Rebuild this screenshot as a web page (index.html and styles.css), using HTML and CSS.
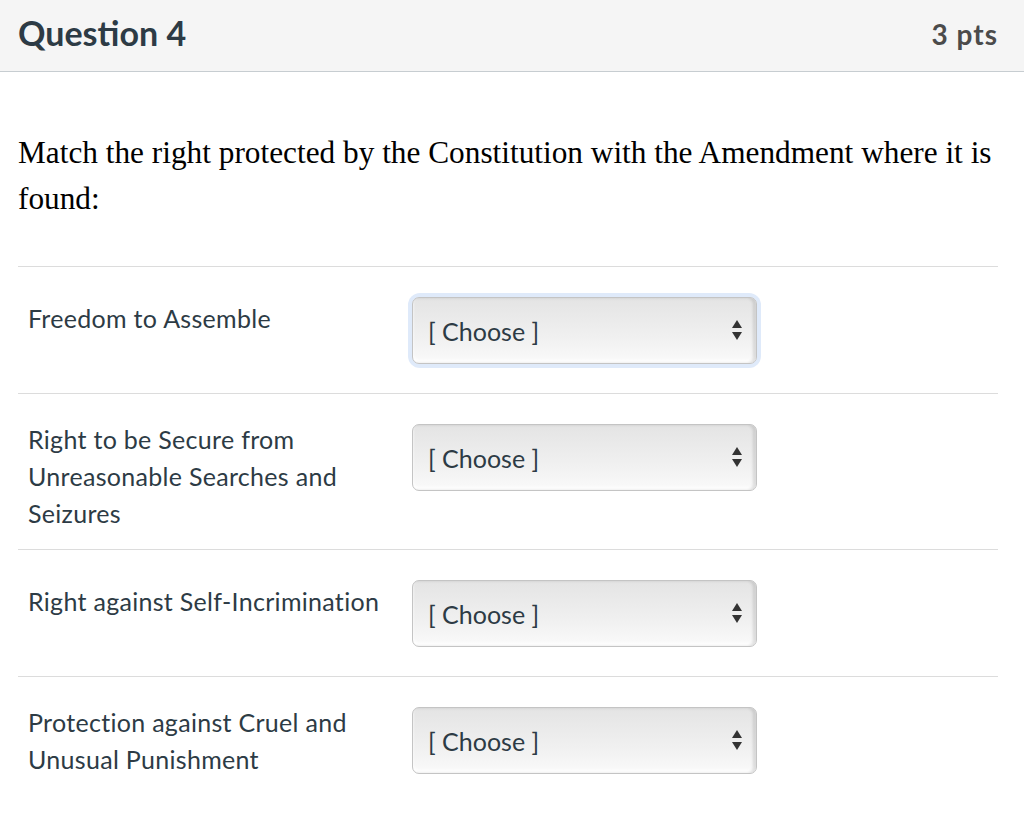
FILE: index.html
```html
<!DOCTYPE html>
<html lang="en">
<head>
<meta charset="utf-8">
<title>Question 4</title>
<link rel="stylesheet" href="styles.css">
</head>
<body>
<div class="question">
  <div class="q-header">
    <h2 class="q-title">Question 4</h2>
    <span class="q-points">3 pts</span>
  </div>
  <div class="q-body">
    <p class="q-text">Match the right protected by the Constitution with the Amendment where it is found:</p>
    <div class="answers">
      <div class="answer-row">
        <div class="answer-label single">Freedom to Assemble</div>
        <div class="select-wrap focused">
          <select class="choose"><option>[ Choose ]</option></select>
          <svg class="arrows" width="10" height="20" viewBox="0 0 10 20"><path d="M5 0 L10 8 L0 8 Z M0 12 L10 12 L5 20 Z" fill="#333"/></svg>
        </div>
      </div>
      <div class="answer-row">
        <div class="answer-label">Right to be Secure from Unreasonable Searches and Seizures</div>
        <div class="select-wrap">
          <select class="choose"><option>[ Choose ]</option></select>
          <svg class="arrows" width="10" height="20" viewBox="0 0 10 20"><path d="M5 0 L10 8 L0 8 Z M0 12 L10 12 L5 20 Z" fill="#333"/></svg>
        </div>
      </div>
      <div class="answer-row">
        <div class="answer-label single">Right against Self-Incrimination</div>
        <div class="select-wrap">
          <select class="choose"><option>[ Choose ]</option></select>
          <svg class="arrows" width="10" height="20" viewBox="0 0 10 20"><path d="M5 0 L10 8 L0 8 Z M0 12 L10 12 L5 20 Z" fill="#333"/></svg>
        </div>
      </div>
      <div class="answer-row">
        <div class="answer-label">Protection against Cruel and Unusual Punishment</div>
        <div class="select-wrap">
          <select class="choose"><option>[ Choose ]</option></select>
          <svg class="arrows" width="10" height="20" viewBox="0 0 10 20"><path d="M5 0 L10 8 L0 8 Z M0 12 L10 12 L5 20 Z" fill="#333"/></svg>
        </div>
      </div>
    </div>
  </div>
</div>
</body>
</html>
```
FILE: styles.css
```css
html, body {
  margin: 0;
  padding: 0;
  background: #ffffff;
}
body {
  font-family: "Lato", "Helvetica Neue", Arial, sans-serif;
  color: #2d3b45;
}
.q-header {
  height: 71px;
  box-sizing: border-box;
  background: #f5f5f5;
  border-bottom: 1px solid #c7cdd1;
  display: flex;
  align-items: center;
  justify-content: space-between;
  padding: 0 26px 7px 18px;
  height: 72px;
}
.q-title {
  margin: 0;
  font-size: 34px;
  font-weight: 700;
  color: #2d3b45;
  letter-spacing: 0;
}
.q-points {
  font-size: 28px;
  font-weight: 700;
  color: #4b4b4b;
  letter-spacing: 1px;
  margin-top: 4px;
}
.q-body {
  padding: 0 26px 0 18px;
}
.q-text {
  margin: 58px 0 44px;
  font-family: "Liberation Serif", "Times New Roman", serif;
  font-size: 31.3px;
  line-height: 46px;
  color: #000;
}
.answer-row {
  display: flex;
  align-items: flex-start;
  gap: 14px;
  border-top: 1px solid #dcdcdc;
  padding: 27px 0 17px 10px;
}
.answer-label {
  width: 370px;
  font-size: 25px;
  line-height: 37px;
  letter-spacing: 0.3px;
  color: #2d3b45;
}
.answer-label.single {
  margin-top: 6px;
}
.select-wrap {
  position: relative;
  margin: 3px 0 12px;
  border-radius: 8px;
}
.select-wrap.focused {
  box-shadow: 0 0 0 4px #dfeafa;
}
.choose {
  appearance: none;
  -webkit-appearance: none;
  display: block;
  width: 345px;
  height: 67px;
  margin: 0;
  padding: 0 40px 0 15px;
  border: 1px solid #c4c4c4;
  border-radius: 7px;
  background: linear-gradient(#e4e4e4, #f0f0f0 60%, #fafafa);
  box-shadow: inset -3px 0 3px rgba(0,0,0,0.12), inset 0 -3px 3px rgba(255,255,255,0.9);
  font-family: "Lato", sans-serif;
  font-size: 25px;
  color: #2d3b45;
  outline: none;
}
.arrows {
  position: absolute;
  right: 15px;
  top: 23px;
  pointer-events: none;
}
```
